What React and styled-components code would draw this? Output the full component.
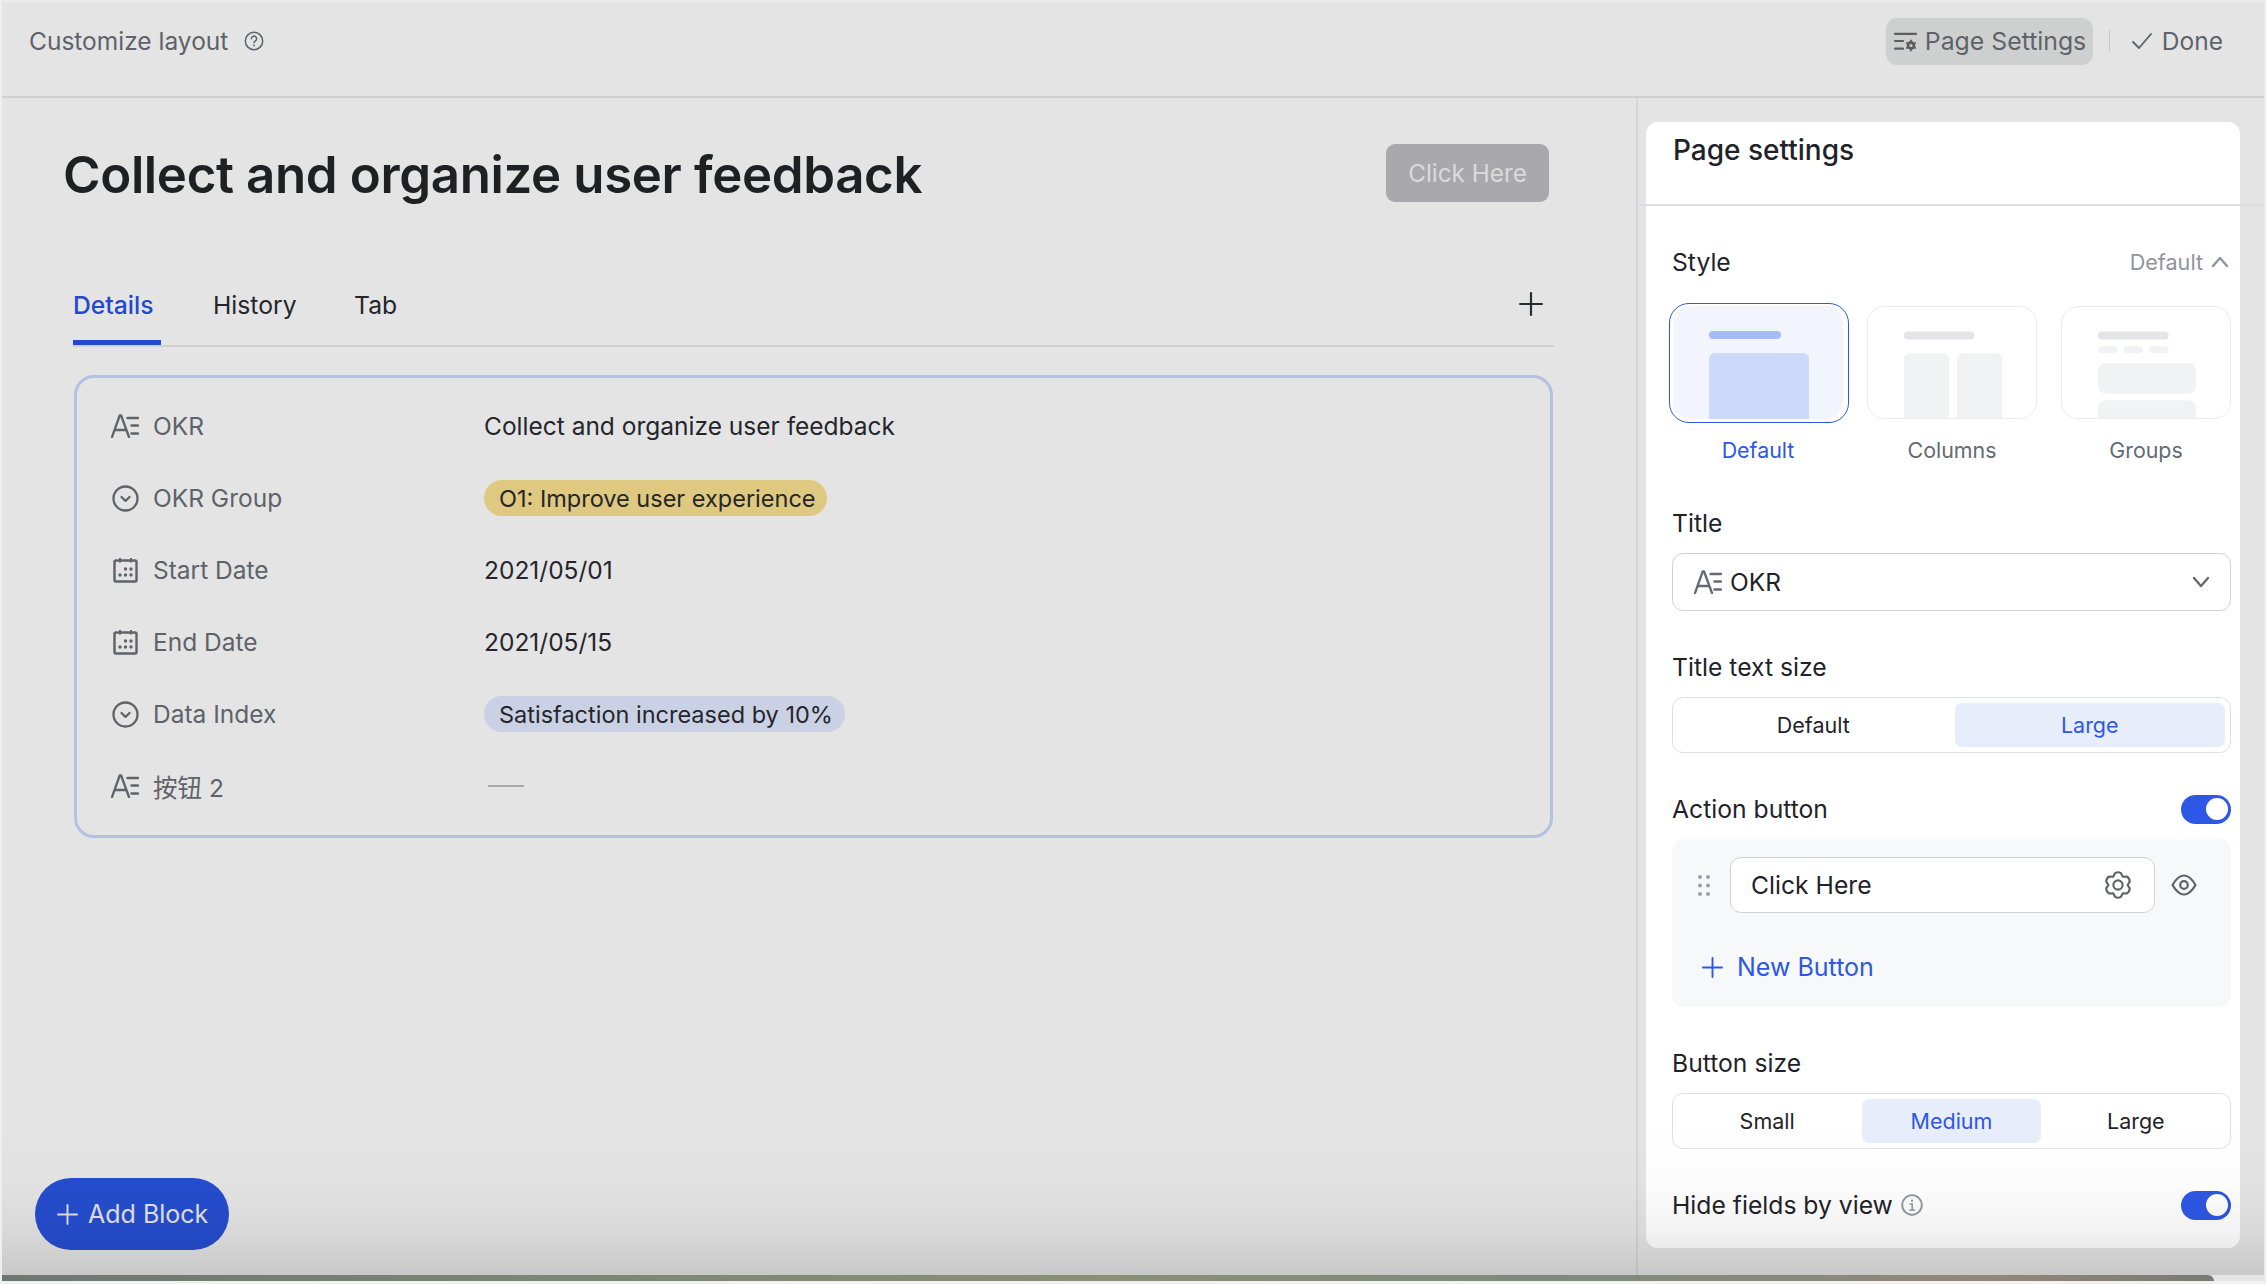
import React from "react";
import styled, { createGlobalStyle } from "styled-components";

const Global = createGlobalStyle`
  html, body { margin: 0; padding: 0; background: #e4e4e4; }
  * { box-sizing: border-box; }
  body { font-family: Inter, "Noto Sans CJK SC", sans-serif; }
`;

const BLUE = "#2d57e6";

const Screen = styled.div`
  position: relative;
  width: 2266px;
  height: 1284px;
  overflow: hidden;
  background: #e4e4e4;
  display: flex;
  flex-direction: column;
  border-top: 2px solid #ececec;
  border-left: 2px solid #efefef;
  border-right: 2px solid #ececec;
  border-bottom: 3px solid #f0f0f0;
  color: #1f2024;
`;

const TopBar = styled.header`
  flex: 0 0 96px;
  height: 96px;
  display: flex;
  align-items: center;
  justify-content: space-between;
  padding: 0 41px 16px 27px;
  border-bottom: 2px solid #cfcfcf;
`;
const TopLeft = styled.div`
  display: flex;
  align-items: center;
  gap: 16px;
  font-size: 24.5px;
  color: #5e6269;
`;
const TopRight = styled.div`
  display: flex;
  align-items: center;
`;
const PageSettingsBtn = styled.div`
  display: flex;
  align-items: center;
  gap: 8px;
  height: 47px;
  width: 207px;
  padding-left: 8px;
  border-radius: 11px;
  background: #ced0cf;
  color: #5e6269;
  font-size: 24.8px;
  white-space: nowrap;
`;
const TopDivider = styled.span`
  width: 1px;
  height: 22px;
  background: #c8c8c8;
  margin: 0 22px 0 16px;
`;
const DoneBtn = styled.div`
  display: flex;
  align-items: center;
  gap: 10px;
  font-size: 24.5px;
  color: #5e6269;
`;

const Body = styled.div`
  flex: 1;
  display: flex;
  min-height: 0;
`;
const Main = styled.main`
  flex: 1;
  min-width: 0;
  padding: 0 84px 0 61px;
  display: flex;
  flex-direction: column;
`;
const TitleRow = styled.div`
  display: flex;
  align-items: center;
  justify-content: space-between;
  padding: 45px 3px 0 0;
`;
const PageTitle = styled.h1`
  margin: 0;
  font-size: 51px;
  line-height: 64px;
  font-weight: 600;
  letter-spacing: -0.37px;
  color: #1f2024;
`;
const ClickBtn = styled.div`
  width: 163px;
  height: 58px;
  margin-bottom: 4px;
  border-radius: 9px;
  background: #a9a9ad;
  color: #dadadc;
  font-size: 24.3px;
  display: flex;
  align-items: center;
  justify-content: center;
`;
const Tabs = styled.div`
  margin-top: 77px;
  margin-left: 10px;
  margin-right: -2px;
  height: 63px;
  display: flex;
  align-items: flex-start;
  border-bottom: 2px solid #cfcfcf;
`;
const TabItem = styled.div`
  position: relative;
  margin-right: ${(p) => p.$mr}px;
  width: ${(p) => p.$w}px;
  height: 61px;
  line-height: 42px;
  font-size: 24.7px;
  font-weight: ${(p) => (p.$on ? 500 : 400)};
  color: ${(p) => (p.$on ? "#2448cc" : "#24262b")};
  &::after {
    content: "";
    display: ${(p) => (p.$on ? "block" : "none")};
    position: absolute;
    left: 0;
    right: 0;
    bottom: 0;
    height: 5px;
    background: #2448cc;
  }
`;
const TabAdd = styled.div`
  margin-left: auto;
  margin-right: 11px;
  margin-top: 8px;
  color: #2a2c31;
  display: flex;
`;

const FieldCard = styled.section`
  margin: 28px -1px 0 11px;
  height: 463px;
  border: 3px solid #b4c2e2;
  border-radius: 20px;
  padding: 12px 0 0 34px;
  display: flex;
  flex-direction: column;
`;
const FieldRow = styled.div`
  height: 72px;
  display: grid;
  grid-template-columns: 373px 1fr;
  align-items: center;
  font-size: 24.5px;
`;
const FieldName = styled.div`
  display: flex;
  align-items: center;
  gap: 14px;
  color: #5e6269;
`;
const IconSlot = styled.span`
  width: 28px;
  height: 28px;
  display: flex;
  align-items: center;
  justify-content: center;
  flex: none;
`;
const Value = styled.div`
  color: #24262b;
`;
const Tag = styled.span`
  display: inline-flex;
  align-items: center;
  justify-self: start;
  height: 36px;
  padding: 0 ${(p) => p.$pr}px 0 15px;
  border-radius: 18px;
  background: ${(p) => p.$bg};
  color: #24262b;
  font-size: 23.5px;
`;
const Dash = styled.span`
  display: block;
  width: 36px;
  height: 2px;
  background: #a9a9a9;
  margin-left: 4px;
`;

const AddBlock = styled.div`
  position: absolute;
  left: 33px;
  top: 1176px;
  width: 194px;
  height: 72px;
  border-radius: 36px;
  background: #254dcf;
  color: #e3e3e3;
  font-size: 25px;
  display: flex;
  align-items: center;
  gap: 10px;
  padding-left: 22px;
  z-index: 2;
`;

const Side = styled.aside`
  flex: 0 0 628px;
  border-left: 2px solid #d6d6d6;
  padding: 24px 24px 0 8px;
  display: flex;
  flex-direction: column;
`;
const Panel = styled.div`
  height: 1126px;
  background: #fff;
  border-radius: 12px;
  display: flex;
  flex-direction: column;
`;
const PanelHead = styled.div`
  height: 84px;
  margin: 0 -24px 0 -8px;
  padding: 8px 0 0 35px;
  border-bottom: 2px solid #dcdde0;
  font-size: 28px;
  line-height: 40px;
  font-weight: 500;
  color: #1f2329;
`;
const PanelBody = styled.div`
  padding: 40px 9px 0 26px;
  display: flex;
  flex-direction: column;
  color: #1f2329;
`;
const Section = styled.div`
  margin-top: ${(p) => p.$mt ?? 40}px;
  display: flex;
  flex-direction: column;
  gap: 14px;
`;
const LabelRow = styled.div`
  display: flex;
  align-items: center;
  justify-content: space-between;
  height: 32px;
  font-size: 24.7px;
  color: #1f2329;
`;
const LabelGroup = styled.span`
  display: inline-flex;
  align-items: center;
  gap: 8px;
`;
const StyleValue = styled.span`
  display: inline-flex;
  align-items: center;
  gap: 8px;
  font-size: 21.6px;
  color: #8f959e;
  margin-right: 2px;
`;
const Cards = styled.div`
  display: flex;
  gap: 24px;
  margin: 28px 0 0 1px;
`;
const StyleOption = styled.div`
  width: 170px;
  display: flex;
  flex-direction: column;
  align-items: center;
  gap: 15px;
  font-size: 21.4px;
  line-height: 32px;
  color: ${(p) => (p.$on ? BLUE : "#646a73")};
`;
const Thumb = styled.div`
  position: relative;
  width: 170px;
  height: 113px;
  border: ${(p) => (p.$on ? "none" : "1.5px solid #ebecef")};
  border-radius: 17px;
  background: ${(p) => (p.$on ? "#f2f5fe" : "#fff")};
  &::after {
    content: "";
    display: ${(p) => (p.$on ? "block" : "none")};
    position: absolute;
    inset: -3px -6px -4px -4px;
    border: 1.5px solid ${BLUE};
    border-radius: 20px;
  }
`;
const ThumbArt = styled.svg`
  display: block;
  width: 100%;
  height: 100%;
`;
const Select = styled.div`
  height: 58px;
  border: 1.5px solid #d0d3d6;
  border-radius: 11px;
  display: flex;
  align-items: center;
  padding: 0 20px 0 21px;
  font-size: 24.5px;
  gap: 8px;
`;
const Chevron = styled.span`
  margin-left: auto;
  display: flex;
`;
const Segmented = styled.div`
  height: 56px;
  border: 1.5px solid #dee0e3;
  border-radius: 11px;
  padding: 5px;
  display: grid;
  grid-template-columns: repeat(${(p) => p.$n}, 1fr);
  gap: 6px;
`;
const Segment = styled.div`
  border-radius: 7px;
  display: flex;
  align-items: center;
  justify-content: center;
  font-size: 21.5px;
  color: ${(p) => (p.$on ? BLUE : "#1f2329")};
  background: ${(p) => (p.$on ? "#e8edfb" : "transparent")};
`;
const Toggle = styled.span`
  width: 50px;
  height: 29px;
  border-radius: 15px;
  background: ${BLUE};
  display: flex;
  align-items: center;
  justify-content: flex-end;
  padding-right: 3px;
  &::after {
    content: "";
    width: 22px;
    height: 22px;
    border-radius: 50%;
    background: #fff;
  }
`;
const ButtonsBox = styled.div`
  height: 168px;
  background: #f7f8fa;
  border-radius: 12px;
  padding: 18px 0 0 26px;
  display: flex;
  flex-direction: column;
`;
const ButtonRow = styled.div`
  display: flex;
  align-items: center;
`;
const DragDots = styled.svg`
  width: 12px;
  height: 21px;
  margin-right: 20px;
  flex: none;
`;
const ButtonInput = styled.div`
  width: 425px;
  height: 56px;
  background: #fff;
  border: 1.5px solid #d0d3d6;
  border-radius: 11px;
  display: flex;
  align-items: center;
  justify-content: space-between;
  padding: 0 22px 0 20px;
  font-size: 24.7px;
  color: #1f2329;
`;
const EyeSlot = styled.span`
  margin-left: 16px;
  display: flex;
`;
const NewButton = styled.div`
  margin-top: 38px;
  margin-left: 4px;
  display: flex;
  align-items: center;
  gap: 14px;
  font-size: 25px;
  line-height: 32px;
  color: ${BLUE};
`;
const Vignette = styled.div`
  position: absolute;
  left: 0;
  right: 0;
  bottom: 6px;
  height: 154px;
  pointer-events: none;
  z-index: 3;
  background: linear-gradient(
    to bottom,
    rgba(0, 0, 0, 0) 0%,
    rgba(0, 0, 0, 0.01) 40%,
    rgba(0, 0, 0, 0.05) 72%,
    rgba(0, 0, 0, 0.12) 100%
  );
`;
const WallStrip = styled.div`
  position: absolute;
  left: 0;
  right: 50px;
  bottom: 0;
  height: 6px;
  border-radius: 0 30px 0 0;
  background: linear-gradient(90deg, #6d7672 0%, #7c8674 25%, #8a8f75 50%, #7f8a7d 70%, #90887a 90%, #7a7a72 100%);
  z-index: 4;
`;

const TextFieldIcon = ({ size = 28, color = "#5e6269" }) => (
  <svg width={size} height={(size * 24) / 28} viewBox="0 0 28 24" fill="none" stroke={color} strokeWidth="2.300" strokeLinecap="round" strokeLinejoin="round">
    <path d="M1 23 8.700 1.500h1.400L18 23" />
    <path d="M4.300 16H15" />
    <path d="M16.500 4H27" strokeWidth="2.400" />
    <path d="M20.500 11.500H27M20.500 19.500H27" strokeWidth="2.400" />
  </svg>
);
const CircleChevron = () => (
  <svg width="27" height="27" viewBox="0 0 27 27" fill="none" stroke="#5e6269" strokeWidth="2.300" strokeLinecap="round" strokeLinejoin="round">
    <circle cx="13.500" cy="13.500" r="12" />
    <path d="M9.500 12l4 4 4-4" />
  </svg>
);
const CalendarIcon = () => (
  <svg width="25" height="25" viewBox="0 0 25 25" fill="none" stroke="#5e6269" strokeLinecap="round">
    <rect x="1.500" y="2.500" width="22" height="21" rx="1.500" strokeWidth="2.400" />
    <path d="M7 .8v3M18 .8v3" strokeWidth="2" />
    <g fill="#5e6269" stroke="none">
      <circle cx="12.500" cy="11" r="1.700" />
      <circle cx="18" cy="11" r="1.700" />
      <circle cx="7" cy="17" r="1.700" />
      <circle cx="12.500" cy="17" r="1.700" />
      <circle cx="18" cy="17" r="1.700" />
    </g>
  </svg>
);
const PlusIcon = ({ size = 22, color = "currentColor", w = 2 }) => (
  <svg width={size} height={size} viewBox="0 0 22 22" fill="none" stroke={color} strokeWidth={w} strokeLinecap="round">
    <path d="M11 1v20M1 11h20" />
  </svg>
);
const HelpIcon = () => (
  <svg width="20" height="20" viewBox="0 0 20 20" fill="none" stroke="#5e6269" strokeWidth="1.500" strokeLinecap="round">
    <circle cx="10" cy="10" r="8.700" />
    <path d="M7.400 7.700a2.600 2.600 0 1 1 4 2.200c-.9.600-1.400 1-1.400 1.900" />
    <path d="M10 14.400v.2" strokeWidth="1.800" />
  </svg>
);
const PageIcon = () => (
  <svg width="23" height="22" viewBox="0 0 23 22" fill="none" stroke="#5a5e63" strokeWidth="2.200" strokeLinecap="round">
    <path d="M1 3.800h21M1 11h8M1 18.700h8" />
    <circle cx="17" cy="15.500" r="3" strokeWidth="2.800" />
    <path d="M17 10.500v1M17 19.500v1M12.800 13l.8.500M20.400 17.500l.8.500M12.800 18l.8-.5M20.400 13.500l.8-.5" strokeWidth="1.800" />
  </svg>
);
const CheckIcon = () => (
  <svg width="20" height="20" viewBox="0 0 20 20" fill="none" stroke="#5e6269" strokeWidth="1.800" strokeLinecap="round" strokeLinejoin="round">
    <path d="M1 11l6 6L19 3" />
  </svg>
);
const ChevronIcon = ({ up, color = "#646a73" }) => (
  <svg width="18" height="12" viewBox="0 0 18 12" fill="none" stroke={color} strokeWidth="2.400" strokeLinecap="round" strokeLinejoin="round">
    <path d={up ? "M2 10l7-8 7 8" : "M2 2l7 8 7-8"} />
  </svg>
);
const EyeIcon = () => (
  <svg width="26" height="26" viewBox="0 0 26 26" fill="none" stroke="#5e6268" strokeWidth="2.200" strokeLinejoin="round">
    <path d="M1.500 13C5 7 9 3.500 13 3.500S21 7 24.500 13C21 19 17 22.500 13 22.500S5 19 1.500 13z" />
    <circle cx="13" cy="13" r="3.800" />
  </svg>
);
const InfoIcon = () => (
  <svg width="22" height="22" viewBox="0 0 22 22" fill="none" stroke="#8f959e" strokeWidth="1.800" strokeLinecap="round">
    <circle cx="11" cy="11" r="9.800" />
    <path d="M9 10h2.200v6M9 16h4.500" strokeWidth="1.500" />
    <path d="M11 6.500v.3" strokeWidth="2.200" />
  </svg>
);

const polar = (r, deg) => {
  const a = (deg * Math.PI) / 180;
  return `${(14 + r * Math.cos(a)).toFixed(2)} ${(14 + r * Math.sin(a)).toFixed(2)}`;
};
const gearPath =
  [0, 1, 2, 3, 4, 5]
    .map((i) => {
      const a = -90 + 60 * i;
      return `${i === 0 ? "M" : "L"}${polar(9.6, a - 30)} L${polar(12.2, a - 14)} Q${polar(13.6, a)} ${polar(12.2, a + 14)}`;
    })
    .join(" ") + " Z";
const GearIcon = () => (
  <svg width="28" height="28" viewBox="0 0 28 28" fill="none" stroke="#5e6268" strokeWidth="2.100" strokeLinejoin="round">
    <path d={gearPath} />
    <circle cx="14" cy="14" r="4.600" />
  </svg>
);

const ART = {
  Default: (
    <>
      <rect x="36" y="25" width="72" height="8" rx="4" fill="#a5bcf6" />
      <path d="M36 53a6 6 0 0 1 6-6h88a6 6 0 0 1 6 6v60H36z" fill="#ccd9f9" />
    </>
  ),
  Columns: (
    <>
      <rect x="36" y="25" width="72" height="8" rx="4" fill="#e4e5e7" />
      <path d="M36 53a6 6 0 0 1 6-6h34a6 6 0 0 1 6 6v60H36z" fill="#f1f2f3" />
      <path d="M90 53a6 6 0 0 1 6-6h34a6 6 0 0 1 6 6v60H90z" fill="#f1f2f3" />
    </>
  ),
  Groups: (
    <>
      <rect x="36" y="25" width="72" height="8" rx="4" fill="#e4e5e7" />
      <rect x="36" y="40" width="20" height="7" rx="3.500" fill="#f1f2f3" />
      <rect x="62" y="40" width="20" height="7" rx="3.500" fill="#f1f2f3" />
      <rect x="88" y="40" width="20" height="7" rx="3.500" fill="#f1f2f3" />
      <rect x="36" y="57" width="100" height="31" rx="8" fill="#f1f2f3" />
      <path d="M36 103a8 8 0 0 1 8-8h84a8 8 0 0 1 8 8v10H36z" fill="#f1f2f3" />
    </>
  ),
};

const fields = [
  { icon: <TextFieldIcon />, name: "OKR", value: <Value>Collect and organize user feedback</Value> },
  { icon: <CircleChevron />, name: "OKR Group", value: <Tag $bg="#dfc87f" $pr={11}>O1: Improve user experience</Tag> },
  { icon: <CalendarIcon />, name: "Start Date", value: <Value>2021/05/01</Value> },
  { icon: <CalendarIcon />, name: "End Date", value: <Value>2021/05/15</Value> },
  { icon: <CircleChevron />, name: "Data Index", value: <Tag $bg="#cbd1e4" $pr={12}>Satisfaction increased by 10%</Tag> },
  { icon: <TextFieldIcon />, name: "按钮 2", value: <Dash /> },
];

export default function App() {
  return (
    <Screen>
      <Global />
      <TopBar>
        <TopLeft>
          Customize layout
          <HelpIcon />
        </TopLeft>
        <TopRight>
          <PageSettingsBtn>
            <PageIcon />
            Page Settings
          </PageSettingsBtn>
          <TopDivider />
          <DoneBtn>
            <CheckIcon />
            Done
          </DoneBtn>
        </TopRight>
      </TopBar>
      <Body>
        <Main>
          <TitleRow>
            <PageTitle>Collect and organize user feedback</PageTitle>
            <ClickBtn>Click Here</ClickBtn>
          </TitleRow>
          <Tabs>
            <TabItem $on $w={88} $mr={52}>Details</TabItem>
            <TabItem $w={83} $mr={58}>History</TabItem>
            <TabItem $w={60} $mr={58}>Tab</TabItem>
            <TabAdd>
              <PlusIcon size={24} />
            </TabAdd>
          </Tabs>
          <FieldCard>
            {fields.map((f) => (
              <FieldRow key={f.name}>
                <FieldName>
                  <IconSlot>{f.icon}</IconSlot>
                  {f.name}
                </FieldName>
                {f.value}
              </FieldRow>
            ))}
          </FieldCard>
        </Main>
        <Side>
          <Panel>
            <PanelHead>Page settings</PanelHead>
            <PanelBody>
              <Section $mt={0}>
                <LabelRow>
                  Style
                  <StyleValue>
                    Default
                    <ChevronIcon up color="#8f959e" />
                  </StyleValue>
                </LabelRow>
              </Section>
              <Cards>
                {Object.keys(ART).map((k, i) => (
                  <StyleOption key={k} $on={i === 0}>
                    <Thumb $on={i === 0}>
                      <ThumbArt viewBox="0 0 170 113">{ART[k]}</ThumbArt>
                    </Thumb>
                    {k}
                  </StyleOption>
                ))}
              </Cards>
              <Section $mt={41}>
                <LabelRow>Title</LabelRow>
                <Select>
                  <TextFieldIcon size={28} color="#646a73" />
                  OKR
                  <Chevron>
                    <ChevronIcon />
                  </Chevron>
                </Select>
              </Section>
              <Section>
                <LabelRow>Title text size</LabelRow>
                <Segmented $n={2}>
                  <Segment>Default</Segment>
                  <Segment $on>Large</Segment>
                </Segmented>
              </Section>
              <Section>
                <LabelRow>
                  Action button
                  <Toggle />
                </LabelRow>
                <ButtonsBox>
                  <ButtonRow>
                    <DragDots viewBox="0 0 12 21" fill="#9aa0a8">
                      <circle cx="2" cy="2" r="2" />
                      <circle cx="10" cy="2" r="2" />
                      <circle cx="2" cy="10.500" r="2" />
                      <circle cx="10" cy="10.500" r="2" />
                      <circle cx="2" cy="19" r="2" />
                      <circle cx="10" cy="19" r="2" />
                    </DragDots>
                    <ButtonInput>
                      Click Here
                      <GearIcon />
                    </ButtonInput>
                    <EyeSlot>
                      <EyeIcon />
                    </EyeSlot>
                  </ButtonRow>
                  <NewButton>
                    <PlusIcon size={21} />
                    New Button
                  </NewButton>
                </ButtonsBox>
              </Section>
              <Section>
                <LabelRow>Button size</LabelRow>
                <Segmented $n={3}>
                  <Segment>Small</Segment>
                  <Segment $on>Medium</Segment>
                  <Segment>Large</Segment>
                </Segmented>
              </Section>
              <Section>
                <LabelRow>
                  <LabelGroup>
                    Hide fields by view
                    <InfoIcon />
                  </LabelGroup>
                  <Toggle />
                </LabelRow>
              </Section>
            </PanelBody>
          </Panel>
        </Side>
      </Body>
      <AddBlock>
        <PlusIcon size={21} />
        Add Block
      </AddBlock>
      <Vignette />
      <WallStrip />
    </Screen>
  );
}
